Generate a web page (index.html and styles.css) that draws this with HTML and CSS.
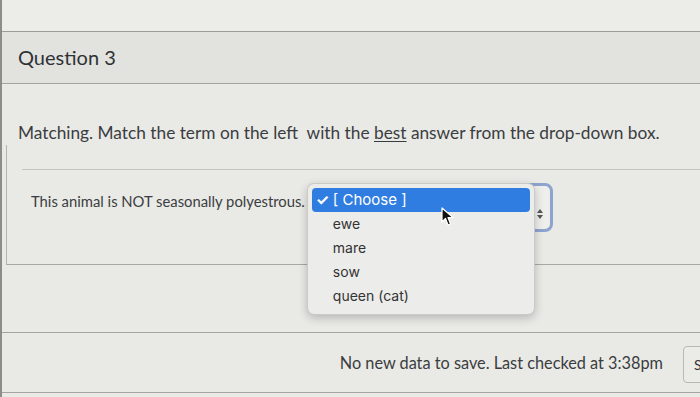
FILE: index.html
```html
<!DOCTYPE html>
<html lang="en">
<head>
    <meta charset="UTF-8">
    <meta name="viewport" content="width=device-width, initial-scale=1.0">
    <title>Question 3</title>
    <link rel="stylesheet" href="styles.css">
</head>
<body>

    <div class="page">
        <div class="top-gap"></div>

        <div class="question">
            <h2 class="question-header">Question 3</h2>

            <p class="question-text">Matching. Match the term on the left&nbsp; with the <u>best</u> answer from the drop-down box.</p>

            <div class="answers">
                <div class="answer-row">
                    <span class="answer-label">This animal is NOT seasonally polyestrous.</span>
                    <div class="select">
                        <span class="select-arrows">
                            <svg width="6" height="10" viewBox="0 0 6 10"><path d="M3 0 L6 4 H0 Z M0 6 H6 L3 10 Z" fill="#555"/></svg>
                        </span>
                        <ul class="menu">
                            <li class="menu-item selected"><span class="check">✓</span>[ Choose ]</li>
                            <li class="menu-item">ewe</li>
                            <li class="menu-item">mare</li>
                            <li class="menu-item">sow</li>
                            <li class="menu-item">queen (cat)</li>
                        </ul>
                        <svg class="cursor" width="14" height="20" viewBox="0 0 14 20">
                            <path d="M1 1 L1 15 L4.5 11.5 L7 18 L9.5 17 L7 10.5 L12 10.5 Z" fill="#111" stroke="#fff" stroke-width="1.2" stroke-linejoin="round"/>
                        </svg>
                    </div>
                </div>
            </div>
        </div>

        <div class="footer">
            <span class="status">No new data to save. Last checked at 3:38pm</span>
            <button class="submit">Submit Quiz</button>
        </div>
    </div>

</body>
</html>
```

FILE: styles.css
```css
body {
    margin: 0;
    background-color: #e9e9e6;
    color: #3a3d40;
    font-family: Lato, "Noto Sans", sans-serif;
    overflow: hidden;
}
.page {
    height: 397px;
    border-left: 2px solid #8c8c88;
    overflow: hidden;
}
.top-gap {
    height: 31px;
    background-color: #ecece9;
}
.question {
    border-top: 1px solid #9c9c98;
}
.question-header {
    margin: 0;
    height: 51px;
    line-height: 51px;
    padding-left: 16px;
    font-size: 20px;
    font-weight: normal;
    color: #2f3235;
    background-color: #e2e2df;
    border-bottom: 1px solid #a4a4a0;
}
.question-text {
    margin: 37px 0 0 0;
    padding-left: 16px;
    font-size: 17.3px;
    line-height: 24px;
}
.question-text u {
    text-underline-offset: 2px;
}
.answers {
    margin-left: 4px;
    border-left: 1px solid #b4b4b0;
    border-bottom: 1px solid #a8a8a4;
    padding: 24px 0 32px 0;
}
.answer-row {
    border-top: 1px solid #c4c4c0;
    margin-left: 15px;
    padding-top: 13px;
    display: flex;
    align-items: flex-start;
}
.answer-label {
    margin: 8px 0 0 9px;
    font-size: 14.8px;
    line-height: 20px;
    color: #3a3d40;
}
.select {
    position: relative;
    margin-left: 6px;
    width: 236px;
    height: 43px;
    border: 3px solid #8ea4cf;
    border-radius: 8px;
    background-color: #eeeeec;
}
.select-arrows {
    position: absolute;
    right: 7px;
    top: 17px;
}
.menu {
    position: absolute;
    left: -7px;
    top: -3px;
    width: 218px;
    margin: 0;
    padding: 4px 4px 6px 4px;
    list-style: none;
    background-color: #ececea;
    border: 1px solid rgba(0, 0, 0, 0.14);
    border-radius: 7px;
    box-shadow: 0 3px 10px rgba(0, 0, 0, 0.22);
    font-family: Inter, "Liberation Sans", sans-serif;
}
.menu-item {
    height: 24px;
    line-height: 24px;
    padding-left: 21px;
    font-size: 14px;
    color: #333;
}
.menu-item.selected {
    padding-left: 4px;
    background-color: #2f7de1;
    border-radius: 4px;
    color: #fff;
    font-size: 15px;
}
.check {
    display: inline-block;
    width: 17px;
    font-weight: bold;
}
.cursor {
    position: absolute;
    left: 127px;
    top: 21px;
}
.footer {
    margin-top: 67px;
    margin-right: -93px;
    height: 59px;
    border-top: 1px solid #a4a4a0;
    border-bottom: 1px solid #a4a4a0;
    display: flex;
    align-items: center;
}
.status {
    flex: 1;
    text-align: right;
    font-size: 16.3px;
    color: #3a3d40;
}
.submit {
    flex-shrink: 0;
    width: 110px;
    height: 37px;
    margin-left: 20px;
    margin-top: 4px;
    border: 1px solid #b8b8b4;
    border-radius: 4px;
    background-color: #ebebe8;
    font-family: Lato, sans-serif;
    font-size: 14px;
    color: #333;
    text-align: left;
    padding-left: 10px;
}
```
